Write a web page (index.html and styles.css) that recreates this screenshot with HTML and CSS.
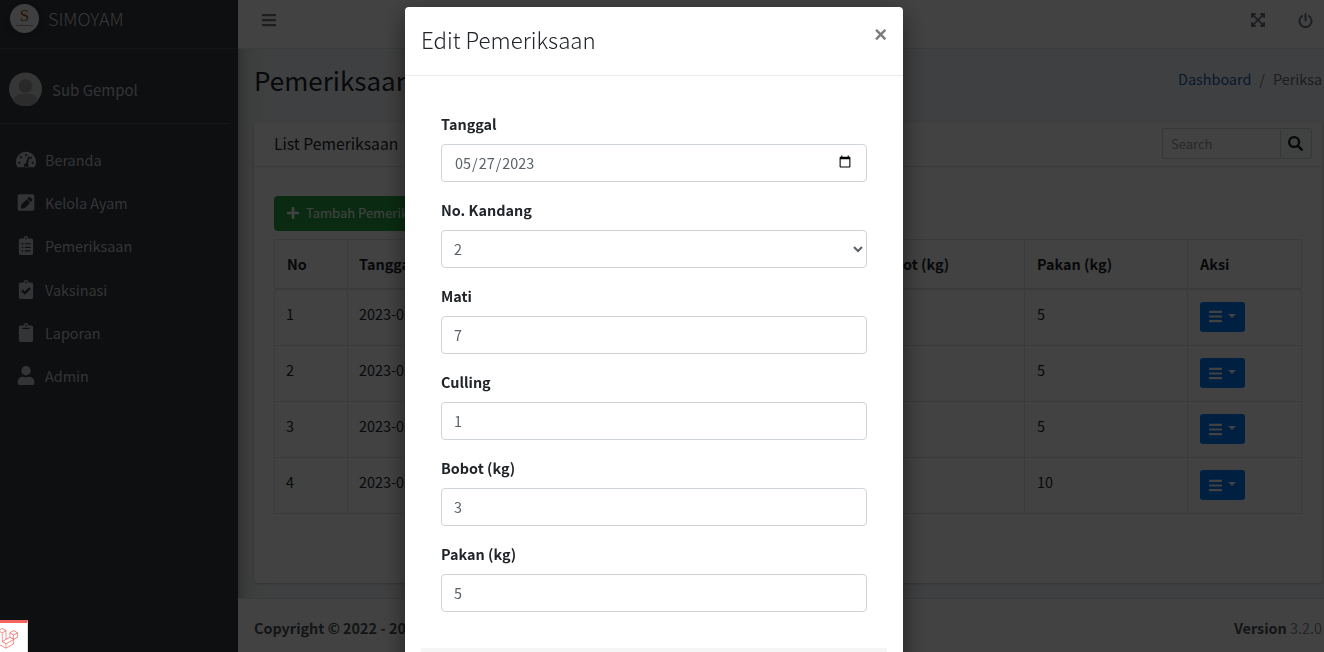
FILE: index.html
```html
<!DOCTYPE html>
<html>
<head>
    <meta charset="utf-8" />
    <title>Pemeriksaan - SIMOYAM</title>
    <link rel="stylesheet" href="styles.css">
</head>
<body>
    <div class="wrapper">
        <aside class="sidebar">
            <div class="brand">
                <span class="brand-logo"><i>S</i><u></u></span>
                <span class="brand-text">SIMOYAM</span>
            </div>
            <div class="user-panel">
                <svg class="avatar" viewBox="0 0 34 34"><circle cx="17" cy="17" r="17"/><circle cx="17" cy="14" r="7"/><path d="M4 29c2-6 7-7 13-7s11 1 13 7a17 17 0 0 1-26 0z"/></svg>
                <span class="user-name">Sub Gempol</span>
            </div>
            <ul class="nav">
                <li><svg viewBox="0 0 576 512"><path d="M288 32C129 32 0 161 0 320c0 53 14 102 39 145 6 9 16 15 27 15h444c11 0 21-6 27-15 25-43 39-92 39-145C576 161 447 32 288 32zm0 64a32 32 0 1 1 0 64 32 32 0 0 1 0-64zM96 384a32 32 0 1 1 0-64 32 32 0 0 1 0 64zm48-160a32 32 0 1 1 0-64 32 32 0 0 1 0 64zm202 162a64 64 0 1 1-62-19l62-186a24 24 0 1 1 45 15zm54-178a32 32 0 1 1 32 32 32 32 0 0 1-32-32zm80 176a32 32 0 1 1 0-64 32 32 0 0 1 0 64z"/></svg>Beranda</li>
                <li><svg viewBox="0 0 448 512"><path d="M400 480H48a48 48 0 0 1-48-48V80a48 48 0 0 1 48-48h352a48 48 0 0 1 48 48v352a48 48 0 0 1-48 48zM238 178 97 319l-9 81a17 17 0 0 0 19 19l81-9 141-141a8 8 0 0 0 0-12l-79-79a8 8 0 0 0-12 0zm147-18-43-43a34 34 0 0 0-48 0l-31 31a8 8 0 0 0 0 12l79 79a8 8 0 0 0 12 0l31-31a34 34 0 0 0 0-48z"/></svg>Kelola Ayam</li>
                <li><svg viewBox="0 0 384 512"><path d="M336 64h-80a64 64 0 0 0-128 0H48A48 48 0 0 0 0 112v352a48 48 0 0 0 48 48h288a48 48 0 0 0 48-48V112a48 48 0 0 0-48-48zM96 424a24 24 0 1 1 0-48 24 24 0 0 1 0 48zm0-96a24 24 0 1 1 0-48 24 24 0 0 1 0 48zm0-96a24 24 0 1 1 0-48 24 24 0 0 1 0 48zm96-192a24 24 0 1 1 0 48 24 24 0 0 1 0-48zm128 368a8 8 0 0 1-8 8H168a8 8 0 0 1-8-8v-16a8 8 0 0 1 8-8h144a8 8 0 0 1 8 8zm0-96a8 8 0 0 1-8 8H168a8 8 0 0 1-8-8v-16a8 8 0 0 1 8-8h144a8 8 0 0 1 8 8zm0-96a8 8 0 0 1-8 8H168a8 8 0 0 1-8-8v-16a8 8 0 0 1 8-8h144a8 8 0 0 1 8 8z"/></svg>Pemeriksaan</li>
                <li><svg viewBox="0 0 384 512"><path d="M336 64h-80a64 64 0 0 0-128 0H48A48 48 0 0 0 0 112v352a48 48 0 0 0 48 48h288a48 48 0 0 0 48-48V112a48 48 0 0 0-48-48zM192 40a24 24 0 1 1 0 48 24 24 0 0 1 0-48zm121 209L170 391a12 12 0 0 1-17 0l-83-84a12 12 0 0 1 0-17l29-28a12 12 0 0 1 17 0l46 46 106-105a12 12 0 0 1 17 0l28 29a12 12 0 0 1 0 17z"/></svg>Vaksinasi</li>
                <li><svg viewBox="0 0 384 512"><path d="M384 112v352a48 48 0 0 1-48 48H48a48 48 0 0 1-48-48V112a48 48 0 0 1 48-48h80a64 64 0 0 1 128 0h80a48 48 0 0 1 48 48zM192 40a24 24 0 1 0 0 48 24 24 0 0 0 0-48zm96 114v-20a6 6 0 0 0-6-6H102a6 6 0 0 0-6 6v20a6 6 0 0 0 6 6h180a6 6 0 0 0 6-6z"/></svg>Laporan</li>
                <li><svg viewBox="0 0 448 512"><path d="M224 256a128 128 0 1 0 0-256 128 128 0 0 0 0 256zm90 32h-17a174 174 0 0 1-146 0h-17A134 134 0 0 0 0 422v42a48 48 0 0 0 48 48h352a48 48 0 0 0 48-48v-42a134 134 0 0 0-134-134z"/></svg>Admin</li>
            </ul>
        </aside>
        <div class="main">
            <nav class="topbar">
                <svg class="top-bars" viewBox="0 0 448 512"><path d="M16 132h416a16 16 0 0 0 16-16V76a16 16 0 0 0-16-16H16A16 16 0 0 0 0 76v40a16 16 0 0 0 16 16zm0 160h416a16 16 0 0 0 16-16v-40a16 16 0 0 0-16-16H16a16 16 0 0 0-16 16v40a16 16 0 0 0 16 16zm0 160h416a16 16 0 0 0 16-16v-40a16 16 0 0 0-16-16H16a16 16 0 0 0-16 16v40a16 16 0 0 0 16 16z"/></svg>
                <div class="top-right">
                    <svg class="top-expand" viewBox="0 0 448 512"><path d="M448 344v112a23.900 23.900 0 0 1-24 24H312c-21.400 0-32.100-25.900-17-41l36.200-36.200L224 295.600 116.800 402.900 153 439c15.100 15.100 4.400 41-17 41H24a23.900 23.900 0 0 1-24-24V344c0-21.400 25.900-32.100 41-17l36.200 36.200L184.500 256 77.200 148.700 41 185c-15.100 15.100-41 4.400-41-17V56a23.900 23.900 0 0 1 24-24h112c21.400 0 32.100 25.900 17 41l-36.200 36.200L224 216.400l107.300-107.300L295.100 73c-15.100-15.100-4.400-41 17-41h112a23.900 23.900 0 0 1 24 24v112c0 21.400-25.900 32.100-41 17l-36.200-36.200L263.500 256l107.300 107.300 36.200-36.200c15.100-15.200 41-4.500 41 16.900z"/></svg>
                    <svg class="top-power" viewBox="0 0 16 16"><path d="M8 1v7M4.300 3.200a6.500 6.500 0 1 0 7.400 0" fill="none" stroke="currentColor" stroke-width="2.100" stroke-linecap="round"/></svg>
                </div>
            </nav>
            <header class="page-head">
                <h1>Pemeriksaan</h1>
                <div class="crumbs"><a>Dashboard</a><span class="sep">/</span><span>Periksa</span></div>
            </header>
            <section class="card">
                <div class="card-head">
                    <span class="card-title">List Pemeriksaan</span>
                    <div class="search">
                        <input type="text" placeholder="Search" />
                        <span class="search-btn"><svg viewBox="0 0 512 512"><path d="M505 443 405 343c-5-4-11-7-17-7h-16a208 208 0 1 0-36 36v16c0 6 3 12 7 17l100 100c9 9 24 9 34 0l28-28c9-10 9-25 0-34zM208 336a128 128 0 1 1 0-256 128 128 0 0 1 0 256z"/></svg></span>
                    </div>
                </div>
                <div class="card-body">
                    <span class="btn-add"><svg viewBox="0 0 448 512"><path d="M416 208H272V64a32 32 0 0 0-32-32h-32a32 32 0 0 0-32 32v144H32a32 32 0 0 0-32 32v32a32 32 0 0 0 32 32h144v144a32 32 0 0 0 32 32h32a32 32 0 0 0 32-32V304h144a32 32 0 0 0 32-32v-32a32 32 0 0 0-32-32z"/></svg>Tambah Pemeriksaan</span>
                    <table class="grid">
                        <thead>
                            <tr><th class="c-no">No</th><th class="c-tgl">Tanggal</th><th class="c-kdg">No. Kandang</th><th class="c-mati">Mati</th><th class="c-cull">Culling</th><th class="c-bbt">Bobot (kg)</th><th class="c-pkn">Pakan (kg)</th><th>Aksi</th></tr>
                        </thead>
                        <tbody>
                            <tr><td>1</td><td>2023-05-27</td><td>2</td><td>7</td><td>1</td><td>3</td><td>5</td><td><span class="btn-act"><svg viewBox="0 0 448 512"><path d="M16 132h416a16 16 0 0 0 16-16V76a16 16 0 0 0-16-16H16A16 16 0 0 0 0 76v40a16 16 0 0 0 16 16zm0 160h416a16 16 0 0 0 16-16v-40a16 16 0 0 0-16-16H16a16 16 0 0 0-16 16v40a16 16 0 0 0 16 16zm0 160h416a16 16 0 0 0 16-16v-40a16 16 0 0 0-16-16H16a16 16 0 0 0-16 16v40a16 16 0 0 0 16 16z"/></svg><b></b></span></td></tr>
                            <tr><td>2</td><td>2023-05-27</td><td>1</td><td>2</td><td>0</td><td>3</td><td>5</td><td><span class="btn-act"><svg viewBox="0 0 448 512"><path d="M16 132h416a16 16 0 0 0 16-16V76a16 16 0 0 0-16-16H16A16 16 0 0 0 0 76v40a16 16 0 0 0 16 16zm0 160h416a16 16 0 0 0 16-16v-40a16 16 0 0 0-16-16H16a16 16 0 0 0-16 16v40a16 16 0 0 0 16 16zm0 160h416a16 16 0 0 0 16-16v-40a16 16 0 0 0-16-16H16a16 16 0 0 0-16 16v40a16 16 0 0 0 16 16z"/></svg><b></b></span></td></tr>
                            <tr><td>3</td><td>2023-05-28</td><td>2</td><td>1</td><td>1</td><td>3</td><td>5</td><td><span class="btn-act"><svg viewBox="0 0 448 512"><path d="M16 132h416a16 16 0 0 0 16-16V76a16 16 0 0 0-16-16H16A16 16 0 0 0 0 76v40a16 16 0 0 0 16 16zm0 160h416a16 16 0 0 0 16-16v-40a16 16 0 0 0-16-16H16a16 16 0 0 0-16 16v40a16 16 0 0 0 16 16zm0 160h416a16 16 0 0 0 16-16v-40a16 16 0 0 0-16-16H16a16 16 0 0 0-16 16v40a16 16 0 0 0 16 16z"/></svg><b></b></span></td></tr>
                            <tr><td>4</td><td>2023-05-29</td><td>1</td><td>3</td><td>2</td><td>4</td><td>10</td><td><span class="btn-act"><svg viewBox="0 0 448 512"><path d="M16 132h416a16 16 0 0 0 16-16V76a16 16 0 0 0-16-16H16A16 16 0 0 0 0 76v40a16 16 0 0 0 16 16zm0 160h416a16 16 0 0 0 16-16v-40a16 16 0 0 0-16-16H16a16 16 0 0 0-16 16v40a16 16 0 0 0 16 16zm0 160h416a16 16 0 0 0 16-16v-40a16 16 0 0 0-16-16H16a16 16 0 0 0-16 16v40a16 16 0 0 0 16 16z"/></svg><b></b></span></td></tr>
                        </tbody>
                    </table>
                </div>
            </section>
            <footer class="footer">
                <b>Copyright © 2022 - 2023 SIMOYAM</b>
                <span class="version"><b>Version</b> 3.2.0</span>
            </footer>
        </div>
    </div>

    <div class="backdrop"></div>

    <div class="debugbar">
        <svg viewBox="0 0 50 52"><path d="M49.626 11.564a.809.809 0 0 1 .028.209v10.972a.8.8 0 0 1-.402.694l-9.209 5.302V39.25c0 .286-.152.55-.4.694L20.42 51.01c-.044.025-.092.041-.14.058-.018.006-.035.017-.054.022a.805.805 0 0 1-.41 0c-.022-.006-.042-.018-.063-.026-.044-.016-.09-.03-.132-.054L.402 39.944A.801.801 0 0 1 0 39.25V6.334c0-.072.01-.142.028-.21.006-.023.02-.044.028-.067.015-.042.029-.085.051-.124.015-.026.037-.047.055-.071.023-.032.044-.065.071-.093.023-.023.053-.04.079-.06.029-.024.055-.05.088-.069h.001l9.61-5.533a.802.802 0 0 1 .8 0l9.61 5.533h.002c.032.02.059.045.088.068.026.02.055.038.078.06.028.029.048.062.072.094.017.024.04.045.054.071.023.04.036.082.052.124.008.023.022.044.028.068a.809.809 0 0 1 .028.209v20.559l8.008-4.611v-10.51c0-.07.01-.141.028-.208.007-.024.02-.045.028-.068.016-.042.03-.085.052-.124.015-.026.037-.047.054-.071.024-.032.044-.065.072-.093.023-.023.052-.04.078-.06.03-.024.056-.05.088-.069h.001l9.611-5.533a.801.801 0 0 1 .8 0l9.61 5.533c.034.02.06.045.09.068.025.02.054.038.077.06.028.029.048.062.072.094.018.024.04.045.054.071.023.039.036.082.052.124.009.023.022.044.028.068zm-1.574 10.718v-9.124l-3.363 1.936-4.646 2.675v9.124l8.01-4.611zm-9.61 16.505v-9.13l-4.57 2.61-13.05 7.448v9.216l17.62-10.144zM1.602 7.719v31.068L19.22 48.93v-9.214l-9.204-5.209-.003-.002-.004-.002c-.031-.018-.057-.044-.086-.066-.025-.02-.054-.036-.076-.058l-.002-.003c-.026-.025-.044-.056-.066-.084-.02-.027-.044-.05-.06-.078l-.001-.003c-.018-.03-.029-.066-.042-.1-.013-.03-.03-.058-.038-.09v-.001c-.01-.038-.012-.078-.016-.117-.004-.03-.012-.06-.012-.09v-.002-21.481L4.965 9.654 1.602 7.72zm8.81-5.994L2.405 6.334l8.005 4.609 8.006-4.61-8.006-4.608zm4.164 28.764l4.645-2.674V7.719l-3.363 1.936-4.646 2.675v20.096l3.364-1.937zM39.243 7.164l-8.006 4.609 8.006 4.609 8.005-4.61-8.005-4.608zm-.801 10.605l-4.646-2.675-3.363-1.936v9.124l4.645 2.674 3.364 1.937v-9.124zM20.02 38.33l11.743-6.704 5.87-3.35-8-4.606-9.211 5.303-8.395 4.833 7.993 4.524z"/></svg>
    </div>

    <div class="modal">
        <div class="modal-head">
            <span class="modal-title">Edit Pemeriksaan</span>
            <span class="modal-close">×</span>
        </div>
        <form class="modal-body">
            <label>Tanggal</label>
            <input type="date" value="2023-05-27" />
            <label>No. Kandang</label>
            <select><option>2</option></select>
            <label>Mati</label>
            <input type="number" value="7" />
            <label>Culling</label>
            <input type="number" value="1" />
            <label>Bobot (kg)</label>
            <input type="number" value="3" />
            <label>Pakan (kg)</label>
            <input type="number" value="5" />
            <div class="modal-strip"></div>
        </form>
    </div>
</body>
</html>
```

FILE: styles.css
```css
* { box-sizing: border-box; }
html, body { height: 100%; }
body { margin: 0; overflow: hidden; background: #f4f6f9; color: #212529; font-family: "Noto Sans CJK SC", "Noto Sans", sans-serif; font-size: 14.400px; }

.wrapper { display: flex; height: 652px; }

/* sidebar */
.sidebar { flex: 0 0 238px; background: #343a40; color: #c2c7d0; box-shadow: 0 14px 28px rgba(0,0,0,.25), 0 10px 10px rgba(0,0,0,.22); }
.brand { display: flex; align-items: center; height: 49px; padding: 0 0 12px 10px; border-bottom: 1px solid #4b545c; }
.brand-logo { display: flex; flex-direction: column; align-items: center; width: 29px; height: 29px; padding-top: 4px; border-radius: 50%; background: #f2f2f2; box-shadow: 0 3px 6px rgba(0,0,0,.16); }
.brand-logo i { color: #a8501e; font-family: "Liberation Serif", serif; font-style: normal; font-size: 17px; line-height: 15px; }
.brand-logo u { width: 17px; height: 1px; margin-top: 2px; background: #b0a090; }
.brand-text { margin-left: 9px; font-size: 18px; font-weight: 300; color: rgba(255,255,255,.8); }
.user-panel { display: flex; align-items: center; height: 75px; margin-right: 8px; padding: 6px 0 0 9px; border-bottom: 1px solid #4f5962; }
.avatar { width: 33px; height: 34px; }
.avatar circle:first-child { fill: #d0d0d0; }
.avatar circle:nth-child(2) { fill: #a0a0a0; }
.avatar path { fill: #aaa; }
.user-name { margin-left: 10px; font-size: 15px; }
.nav { list-style: none; margin: 13.600px 0 0; padding: 0; }
.nav li { display: flex; align-items: center; height: 43.300px; padding-left: 16px; font-size: 14.400px; }
.nav svg { width: 20px; height: 19px; margin-right: 9px; fill: currentColor; }

/* top */
.main { flex: 1; min-width: 0; display: flex; flex-direction: column; }
.topbar { display: flex; align-items: center; justify-content: space-between; flex: 0 0 49px; padding: 0 11px 8px 24px; background: #fff; border-bottom: 1px solid #dee2e6; color: #6c757d; }
.top-bars { width: 14px; height: 16px; fill: currentColor; }
.top-right { display: flex; align-items: center; gap: 33px; }
.top-expand { width: 14px; height: 16px; fill: currentColor; }
.top-power { width: 15px; height: 15px; }
.page-head { display: flex; justify-content: space-between; align-items: center; flex: 0 0 73px; padding: 0 2px 13px 16px; }
.page-head h1 { margin: 0; font-size: 26px; font-weight: 400; color: #212529; }
.crumbs { display: flex; padding-bottom: 2px; font-size: 14.400px; color: #6c757d; }
.crumbs a { color: #2a5db0; }
.sep { margin: 0 8px; }

/* card */
.card { flex: 0 0 461px; margin: 0 2px 0 16px; background: #fff; border-radius: 4px; box-shadow: 0 0 1px rgba(0,0,0,.125), 0 1px 3px rgba(0,0,0,.2); }
.card-head { display: flex; justify-content: space-between; align-items: center; height: 45px; padding: 0 10px 0 20px; border-bottom: 1px solid rgba(0,0,0,.125); }
.card-title { padding-bottom: 2px; font-size: 15.700px; color: #212529; }
.search { display: flex; height: 31px; margin-top: -1px; }
.search input { width: 118px; padding: 0 8px; border: 1px solid #ced4da; border-right: 0; border-radius: 3px 0 0 3px; font: inherit; font-size: 13px; }
.search input::placeholder { color: #939ba2; }
.search-btn { display: flex; align-items: center; justify-content: center; width: 32px; padding-right: 2px; border: 1px solid #ced4da; border-radius: 0 3px 3px 0; background: #f8f9fa; }
.search-btn svg { width: 15px; height: 15px; fill: #212529; }
.card-body { padding: 29px 20px 0; }
.btn-add { display: flex; align-items: center; width: 190px; height: 35px; padding: 0 0 2px 13px; background: #28a745; border-radius: 4px; color: #fff; font-size: 13px; }
.btn-add svg { width: 12px; height: 14px; margin-right: 7px; fill: currentColor; }

/* table */
.grid { width: 1028px; margin-top: 8px; border-collapse: collapse; table-layout: fixed; }
.grid th, .grid td { padding: 0 12px; border: 1px solid #dee2e6; text-align: left; }
.grid th { height: 49px; padding-bottom: 1px; border-bottom-width: 2px; font-size: 14.400px; font-weight: 700; }
.grid td { height: 56px; padding-top: 13px; line-height: 22px; vertical-align: top; font-size: 14.400px; color: #212529; }
.grid tbody tr:first-child td { height: 57px; }
.grid td:nth-child(-n+2), .grid th:nth-child(2) { padding-left: 11px; }
.c-no { width: 73px; }
.c-tgl { width: 130px; }
.c-kdg { width: 130px; }
.c-mati { width: 130px; }
.c-cull { width: 125px; }
.c-bbt { width: 162px; }
.c-pkn { width: 163px; }
.btn-act { display: flex; align-items: center; justify-content: center; gap: 6px; width: 45px; height: 30px; margin-top: -1px; background: #007bff; border-radius: 3px; color: #fff; }
.btn-act svg { width: 13px; height: 15px; fill: currentColor; }
.btn-act b { border-top: 4px solid; border-left: 4px solid transparent; border-right: 4px solid transparent; margin-top: -2px; }

.footer { display: flex; justify-content: space-between; align-items: center; flex: 1; margin-top: 15px; padding: 4px 2px 0 16px; background: #fff; border-top: 1px solid #dee2e6; color: #869099; }
.footer > b, .version b { color: #4a5158; }

/* over the page */
.backdrop { position: fixed; inset: 0; background: rgba(0,0,0,.74); }
.debugbar { position: fixed; left: 0; bottom: 0; width: 28px; height: 32px; padding-top: 5px; background: #fff; border-top: 3px solid #f4645f; border-right: 1px solid #ddd; overflow: hidden; }
.debugbar svg { display: block; width: 20px; height: 21px; margin-left: -2px; fill: #f4645f; }
.modal { position: fixed; left: 405px; top: 7px; width: 498px; height: 900px; background: #fff; border-radius: 4px; box-shadow: 0 8px 24px rgba(0,0,0,.5); }
.modal-head { display: flex; justify-content: space-between; height: 69px; padding: 15px 16px 0; border-bottom: 1px solid #e9ecef; }
.modal-title { font-size: 22.300px; line-height: 34px; color: #212529; font-weight: 300; }
.modal-close { margin-top: -3px; font-family: "Liberation Sans", sans-serif; font-size: 22px; line-height: 32px; font-weight: 700; color: #7b7b7b; }
.modal-body { padding: 38px 36px 0; }
.modal-body label { display: block; height: 22px; margin-bottom: 8px; line-height: 20px; font-weight: 700; color: #212529; }
.modal-body input, .modal-body select { display: block; width: 100%; height: 38px; margin-bottom: 18px; padding: 0 12px 2px; background: #fff; border: 1px solid #ced4da; border-radius: 4px; color: #5a6168; font: inherit; }
.modal-body select { padding-left: 8px; }
.modal-body input::-webkit-outer-spin-button, .modal-body input::-webkit-inner-spin-button { -webkit-appearance: none; margin: 0; }
.modal-strip { height: 8px; margin: 36px -20px 0; background: #f5f5f5; }
```
